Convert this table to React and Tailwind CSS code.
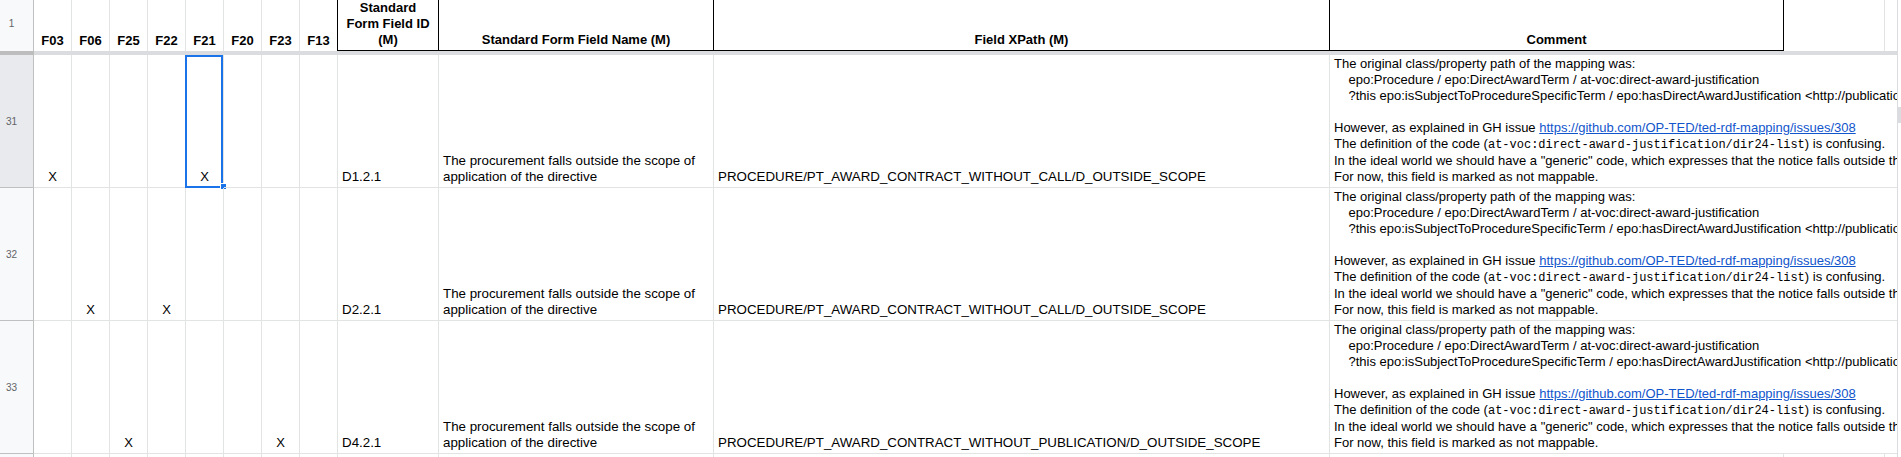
import React from 'react';

const FCOLS = ['F03', 'F06', 'F25', 'F22', 'F21', 'F20', 'F23', 'F13'];
const GRID = 'border-[#e2e3e3]';
const FONT = { fontFamily: '"Liberation Sans", Arial, sans-serif' };

const ROWS = [
  { num: 31, marks: ['F03', 'F21'], id: 'D1.2.1', xpath: 'PROCEDURE/PT_AWARD_CONTRACT_WITHOUT_CALL/D_OUTSIDE_SCOPE', selected: true },
  { num: 32, marks: ['F06', 'F22'], id: 'D2.2.1', xpath: 'PROCEDURE/PT_AWARD_CONTRACT_WITHOUT_CALL/D_OUTSIDE_SCOPE' },
  { num: 33, marks: ['F25', 'F23'], id: 'D4.2.1', xpath: 'PROCEDURE/PT_AWARD_CONTRACT_WITHOUT_PUBLICATION/D_OUTSIDE_SCOPE' },
];

const Comment = () => (
  <div className="whitespace-pre text-[13px] leading-4 text-black">
    <div>The original class/property path of the mapping was:</div>
    <div>{'    '}epo:Procedure / epo:DirectAwardTerm / at-voc:direct-award-justification</div>
    <div>{'    '}?this epo:isSubjectToProcedureSpecificTerm / epo:hasDirectAwardJustification &lt;http://publications.europa.eu/resource/authority/direct-award-justification/dir24-list&gt;</div>
    <div>&nbsp;</div>
    <div>
      However, as explained in GH issue{' '}
      <a className="text-[#1155cc] underline">https://github.com/OP-TED/ted-rdf-mapping/issues/308</a>
    </div>
    <div>
      The definition of the code (
      <span className="text-[12px]" style={{ fontFamily: '"Liberation Mono", "DejaVu Sans Mono", monospace' }}>
        at-voc:direct-award-justification/dir24-list
      </span>
      ) is confusing.
    </div>
    <div>In the ideal world we should have a "generic" code, which expresses that the notice falls outside the scope of the directive.</div>
    <div>For now, this field is marked as not mappable.</div>
  </div>
);

const HeadCell = ({ children, className = '' }) => (
  <div className={`flex flex-col justify-end items-center text-center px-1 pb-[2px] text-[13px] leading-4 font-bold text-black ${className}`}>
    {children}
  </div>
);

export default function App() {
  return (
    <div className="flex w-[1901px] h-[457px] bg-white overflow-hidden" style={FONT}>
      <div className="w-[1897px] h-full overflow-hidden">
        <div className="grid grid-cols-[34px_repeat(8,38px)_101px_275px_616px_454px_101px_12px] grid-rows-[51px_4px_133px_133px_133px_3px]">
          {/* row 1: headers */}
          <div className="bg-[#f8f9fa] border-r border-[#c0c0c0] flex">
            <span className="w-[23px] pt-[16px] text-center text-[10px] text-[#5f6368]">1</span>
          </div>
          {FCOLS.map((c) => (
            <HeadCell key={c} className={`border-r ${c === 'F13' ? 'border-black' : GRID}`}>{c}</HeadCell>
          ))}
          <HeadCell className="border-r border-b border-black">Standard Form Field ID (M)</HeadCell>
          <HeadCell className="border-r border-b border-black">Standard Form Field Name (M)</HeadCell>
          <HeadCell className="border-r border-b border-black">Field XPath (M)</HeadCell>
          <HeadCell className="border-r border-b border-black">Comment</HeadCell>
          <div className={`border-r ${GRID}`} />
          <div />

          {/* frozen row divider */}
          <div className="bg-[#bdbdbd]" />
          <div className="col-span-14 bg-[#dadce0]" />

          {ROWS.map((r) => (
            <React.Fragment key={r.num}>
              <div className={`${r.selected ? 'bg-[#e8eaed]' : 'bg-[#f8f9fa]'} border-r border-b border-[#c0c0c0] flex items-center`}>
                <span className="w-[23px] text-center text-[10px] text-[#5f6368]">{r.num}</span>
              </div>
              {FCOLS.map((c) => (
                <div key={c} className={`relative flex items-end justify-center pb-[2px] border-r border-b ${GRID} text-[13px] leading-4 text-black`}>
                  {r.marks.includes(c) ? 'X' : ''}
                  {r.selected && c === 'F21' && (
                    <>
                      <div className="absolute -left-px top-0 w-[38px] h-[133px] border-2 border-[#1a73e8]" />
                      <div className="absolute -right-[4px] -bottom-[3px] w-[7px] h-[7px] bg-[#1a73e8] border border-white" />
                    </>
                  )}
                </div>
              ))}
              <div className={`flex items-end px-[4px] pb-[2px] border-r border-b ${GRID} text-[13.33px] leading-4 text-black`}>{r.id}</div>
              <div className={`flex items-end px-[4px] pb-[2px] border-r border-b ${GRID} text-[13.33px] leading-4 text-black`}>
                The procurement falls outside the scope of application of the directive
              </div>
              <div className={`flex items-end px-[4px] pb-[2px] border-r border-b ${GRID} text-[13.33px] leading-4 text-black`}>{r.xpath}</div>
              <div className={`relative z-10 flex items-end pl-[4px] pb-[2px] border-b ${GRID}`}>
                <Comment />
              </div>
              <div className={`border-b ${GRID}`} />
              <div className={`border-b ${GRID}`} />
            </React.Fragment>
          ))}

          {/* next row, cut off */}
          <div className="bg-[#f8f9fa] border-r border-[#c0c0c0]" />
          {Array.from({ length: 13 }).map((_, i) => (
            <div key={i} className={`border-r ${GRID}`} />
          ))}
          <div />
        </div>
      </div>
      <div className="w-[4px] h-full border-l border-[#dadce0] bg-white flex flex-col">
        <div className="mt-[107px] h-[16px] w-full bg-[#dadce0]" />
      </div>
    </div>
  );
}
